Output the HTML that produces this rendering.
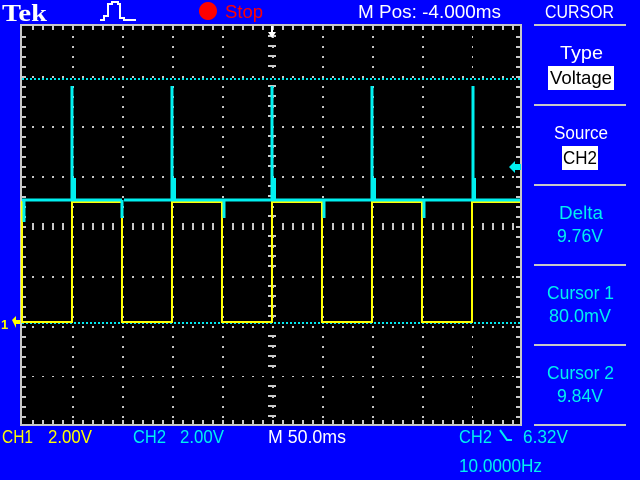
<!DOCTYPE html>
<html><head><meta charset="utf-8"><style>
html,body{margin:0;padding:0;background:#0000ff;width:640px;height:480px;overflow:hidden}
svg{display:block}
text{font-family:"Liberation Sans",sans-serif;font-size:18px}
</style></head><body>
<svg width="640" height="480" viewBox="0 0 640 480" xmlns="http://www.w3.org/2000/svg">
<defs>
<pattern id="vd" x="22" y="26" width="50" height="10" patternUnits="userSpaceOnUse"><rect x="0" y="0" width="2" height="2" fill="#c8c8c8"/></pattern>
<pattern id="hd" x="22" y="26" width="10" height="50" patternUnits="userSpaceOnUse"><rect x="0" y="0" width="2" height="2" fill="#c8c8c8"/></pattern>
</defs>
<rect width="640" height="480" fill="#0000ff"/>
<rect x="20" y="24" width="502" height="402" fill="#000"/>
<rect x="71" y="34" width="402" height="390" fill="url(#vd)"/>
<rect x="30" y="75" width="490" height="302" fill="url(#hd)"/>
<g stroke="#c8c8c8" stroke-width="2">
<path d="M268 36 H276 M268 46 H276 M268 56 H276 M268 66 H276 M268 86 H276 M268 96 H276 M268 106 H276 M268 116 H276 M268 136 H276 M268 146 H276 M268 156 H276 M268 166 H276 M268 186 H276 M268 196 H276 M268 216 H276 M268 236 H276 M268 246 H276 M268 256 H276 M268 266 H276 M268 286 H276 M268 296 H276 M268 306 H276 M268 316 H276 M268 336 H276 M268 346 H276 M268 356 H276 M268 366 H276 M268 386 H276 M268 396 H276 M268 406 H276 M268 416 H276"/>
<path d="M33 223 V230 M43 223 V230 M53 223 V230 M63 223 V230 M83 223 V230 M93 223 V230 M103 223 V230 M113 223 V230 M133 223 V230 M143 223 V230 M153 223 V230 M163 223 V230 M183 223 V230 M193 223 V230 M203 223 V230 M213 223 V230 M233 223 V230 M243 223 V230 M253 223 V230 M263 223 V230 M283 223 V230 M293 223 V230 M303 223 V230 M313 223 V230 M333 223 V230 M343 223 V230 M353 223 V230 M363 223 V230 M383 223 V230 M393 223 V230 M403 223 V230 M413 223 V230 M433 223 V230 M443 223 V230 M453 223 V230 M463 223 V230 M483 223 V230 M493 223 V230 M503 223 V230 M513 223 V230"/>
</g>
<rect x="21" y="25" width="500" height="400" fill="none" stroke="#c8c8c8" stroke-width="2"/>
<path d="M32 28 H521" stroke="#c8c8c8" stroke-width="4" stroke-dasharray="2 8"/>
<path d="M32 422 H521" stroke="#c8c8c8" stroke-width="4" stroke-dasharray="2 8"/>
<path d="M24 36 V425" stroke="#c8c8c8" stroke-width="4" stroke-dasharray="2 8"/>
<path d="M518 36 V425" stroke="#c8c8c8" stroke-width="4" stroke-dasharray="2 8"/>
<path d="M22 79 H520" stroke="#00e8f0" stroke-width="2" stroke-dasharray="2 2"/>
<path d="M22 323 H520" stroke="#00e8f0" stroke-width="2" stroke-dasharray="2 2"/>
<path d="M22 201 V322 H72 V202 H122 V322 H172 V202 H222 V322 H272 V202 H322 V322 H372 V202 H422 V322 H472 V202 H520" fill="none" stroke="#ffff00" stroke-width="2"/>
<path d="M22 200 H24 V222 M24 200 H72 V86 V200 H122 M122 200 V218 M124 200 H172 V86 V200 H222 M224 200 V218 M222 200 H272 V86 V200 H322 M324 200 V218 M322 200 H372 V86 V200 H422 M424 200 V218 M422 200 H473 V86 V200 H520" fill="none" stroke="#00f0f0" stroke-width="3"/>
<g fill="#00f0f0">
<rect x="73" y="178" width="3" height="22"/><rect x="173" y="178" width="3" height="22"/><rect x="273" y="178" width="3" height="22"/><rect x="373" y="178" width="3" height="22"/><rect x="473" y="178" width="3" height="22"/>
<polygon points="509,167 515,161 515,164 521,164 521,170 515,170 515,173"/>
</g>
<polygon points="268,32 276,32 272,38" fill="#fff"/><rect x="271" y="26" width="2" height="8" fill="#fff"/>
<text x="1" y="329" fill="#ffff00" style="font-size:13px;font-weight:bold">1</text>
<polygon points="12,320 16,316 16,320 20,320 20,324 16,324 16,328" fill="#ffff00"/>
<text x="2" y="21" fill="#fff" style="font-family:'Liberation Serif',serif;font-size:24px;font-weight:bold" textLength="45" lengthAdjust="spacingAndGlyphs">Tek</text>
<path d="M100 20 H104 V16 H108 V4 H112 V2 H118 V4 H120 V18 H124 V20 H136" fill="none" stroke="#fff" stroke-width="2"/>
<circle cx="208" cy="11" r="9" fill="#ff0000"/>
<text x="225" y="18" fill="#ff0000" textLength="38" lengthAdjust="spacingAndGlyphs">Stop</text>
<text x="358" y="18" fill="#fff" textLength="143" lengthAdjust="spacingAndGlyphs">M Pos: -4.000ms</text>
<text x="545" y="18" fill="#fff" textLength="69" lengthAdjust="spacingAndGlyphs">CURSOR</text>
<g stroke="#c8c8c8" stroke-width="2">
<path d="M534 25 H626 M534 105 H626 M534 185 H626 M534 265 H626 M534 345 H626 M534 425 H626"/>
</g>
<text x="560" y="59" fill="#fff" textLength="43" lengthAdjust="spacingAndGlyphs">Type</text>
<rect x="548" y="66" width="66" height="24" fill="#fff"/>
<text x="550" y="84" fill="#000" textLength="62" lengthAdjust="spacingAndGlyphs">Voltage</text>
<text x="554" y="139" fill="#fff" textLength="54" lengthAdjust="spacingAndGlyphs">Source</text>
<rect x="562" y="146" width="36" height="24" fill="#fff"/>
<text x="563" y="164" fill="#000" textLength="34" lengthAdjust="spacingAndGlyphs">CH2</text>
<text x="559" y="219" fill="#00f0f0" textLength="44" lengthAdjust="spacingAndGlyphs">Delta</text>
<text x="557" y="242" fill="#00f0f0" textLength="46" lengthAdjust="spacingAndGlyphs">9.76V</text>
<text x="547" y="299" fill="#00f0f0" textLength="67" lengthAdjust="spacingAndGlyphs">Cursor 1</text>
<text x="549" y="322" fill="#00f0f0" textLength="62" lengthAdjust="spacingAndGlyphs">80.0mV</text>
<text x="547" y="379" fill="#00f0f0" textLength="67" lengthAdjust="spacingAndGlyphs">Cursor 2</text>
<text x="557" y="402" fill="#00f0f0" textLength="46" lengthAdjust="spacingAndGlyphs">9.84V</text>
<text x="2" y="443" fill="#ffff00" textLength="31" lengthAdjust="spacingAndGlyphs">CH1</text>
<text x="48" y="443" fill="#ffff00" textLength="44" lengthAdjust="spacingAndGlyphs">2.00V</text>
<text x="133" y="443" fill="#00f0f0" textLength="33" lengthAdjust="spacingAndGlyphs">CH2</text>
<text x="180" y="443" fill="#00f0f0" textLength="44" lengthAdjust="spacingAndGlyphs">2.00V</text>
<text x="268" y="443" fill="#fff" textLength="78" lengthAdjust="spacingAndGlyphs">M 50.0ms</text>
<text x="459" y="443" fill="#00f0f0" textLength="33" lengthAdjust="spacingAndGlyphs">CH2</text>
<path d="M500 430 L507 440 H512" fill="none" stroke="#00f0f0" stroke-width="2"/>
<text x="523" y="443" fill="#00f0f0" textLength="45" lengthAdjust="spacingAndGlyphs">6.32V</text>
<text x="459" y="472" fill="#00f0f0" textLength="83" lengthAdjust="spacingAndGlyphs">10.0000Hz</text>
</svg>
</body></html>
